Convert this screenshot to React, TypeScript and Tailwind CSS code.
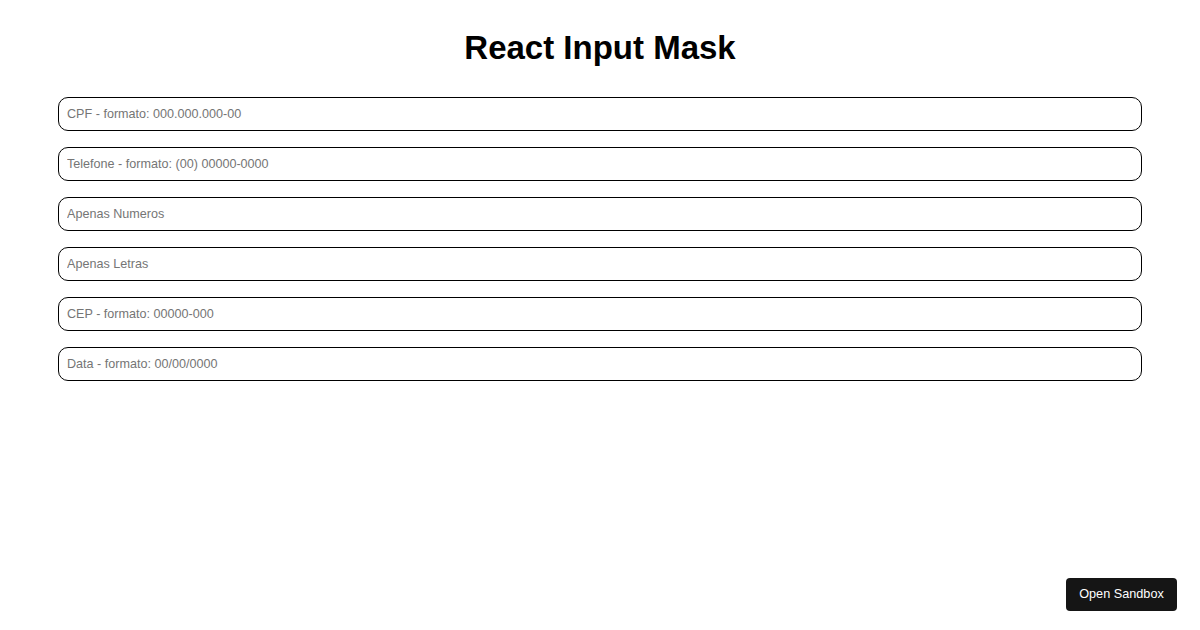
import React from "react";

const fields = [
  "CPF - formato: 000.000.000-00",
  "Telefone - formato: (00) 00000-0000",
  "Apenas Numeros",
  "Apenas Letras",
  "CEP - formato: 00000-000",
  "Data - formato: 00/00/0000",
];

export default function App() {
  return (
    <div
      className="relative w-[1200px] h-[630px] bg-white overflow-hidden"
      style={{ fontFamily: '"Liberation Sans", Arial, sans-serif' }}
    >
      <h1 className="pt-[29px] text-center text-[33px] leading-[37px] font-bold text-black">
        React Input Mask
      </h1>
      <div className="mt-[31px] flex flex-col gap-4 px-[58px]">
        {fields.map((f) => (
          <input
            key={f}
            placeholder={f}
            className="h-[34px] w-full rounded-[10px] border border-black px-2 pb-[1px] text-[12.6px] text-black placeholder:text-[#757575] outline-none"
          />
        ))}
      </div>
      <button className="absolute right-[23px] bottom-[19px] h-[33px] w-[111px] rounded-[4px] bg-[#151515] text-[12.7px] text-white">
        Open Sandbox
      </button>
    </div>
  );
}
